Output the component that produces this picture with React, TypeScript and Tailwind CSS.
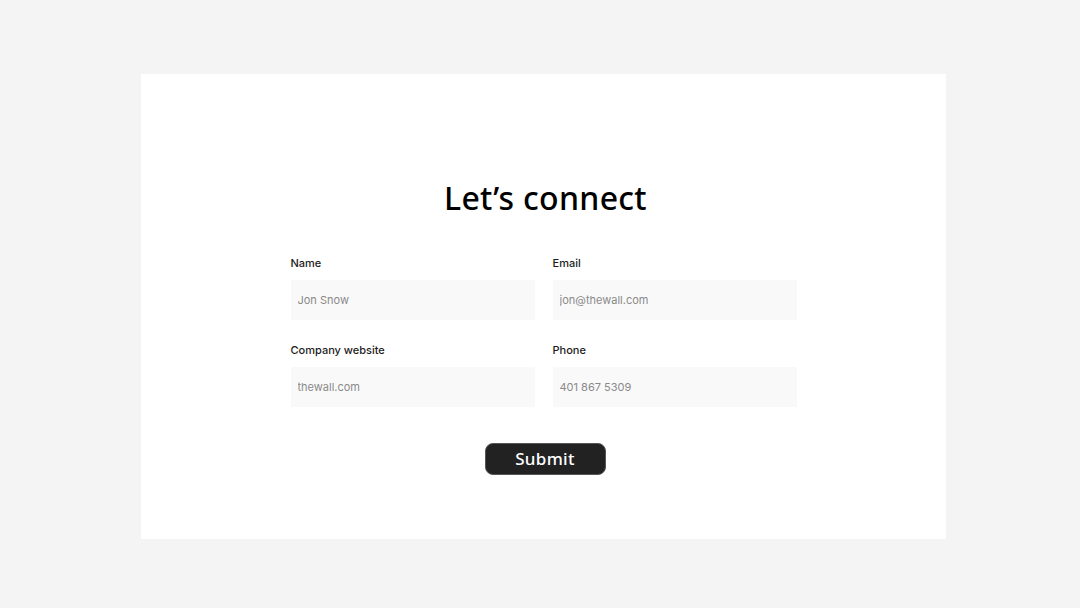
import React from 'react'

const fields = [
  { label: 'Name', placeholder: 'Jon Snow' },
  { label: 'Email', placeholder: 'jon@thewall.com' },
  { label: 'Company website', placeholder: 'thewall.com' },
  { label: 'Phone', placeholder: '401 867 5309' },
]

function Field({ label, placeholder }: { label: string; placeholder: string }) {
  return (
    <div className="flex flex-col">
      <label className="h-[14px] text-[11px] leading-[14px] font-medium text-[#1c1c1c]">{label}</label>
      <input
        placeholder={placeholder}
        className="mt-[10px] h-[40px] w-[244px] bg-[#f9f9f9] px-[7px] text-[11px] text-[#333] outline-none placeholder:text-[#8a8a8a]"
      />
    </div>
  )
}

export default function App() {
  return (
    <div className="min-h-[608px] w-full bg-[#f4f4f4] pt-[74px] pl-[141px] font-['Inter',sans-serif]">
      <div className="flex h-[465px] w-[805px] flex-col items-center bg-white pt-[104px]">
        <h1 className="ml-[4px] h-[40px] text-[32px] leading-[40px] font-medium tracking-[0.3px] text-black font-['Noto_Sans',sans-serif]">
          Let’s connect
        </h1>
        <form className="mt-[38px] grid grid-cols-2 gap-x-[18px] gap-y-[23px]">
          {fields.map((f) => (
            <Field key={f.label} {...f} />
          ))}
        </form>
        <button className="mt-[36px] ml-[3px] h-[32px] w-[121px] rounded-[8px] border border-[#555] bg-[#222] text-[17px] font-medium tracking-[0.3px] text-white font-['Noto_Sans',sans-serif]">
          Submit
        </button>
      </div>
    </div>
  )
}
